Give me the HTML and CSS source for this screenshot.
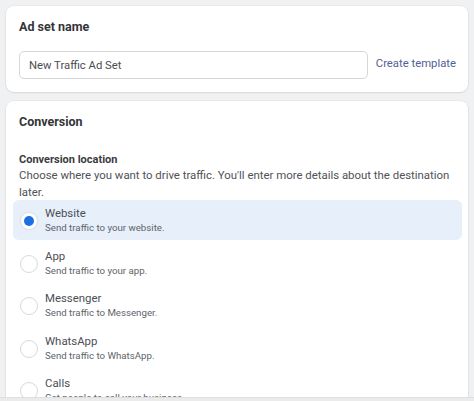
FILE: index.html
```html
<!DOCTYPE html>
<html lang="en">
<head>
<meta charset="utf-8">
<title>Ad set</title>
<link rel="stylesheet" href="styles.css">
</head>
<body>
<div class="page">
  <div class="scroll">
    <section class="card card-name">
      <h2 class="card-title">Ad set name</h2>
      <div class="name-row">
        <div class="input">New Traffic Ad Set</div>
        <a class="link" href="#">Create template</a>
      </div>
    </section>
    <section class="card card-conv">
      <h2 class="card-title">Conversion</h2>
      <div class="field-label">Conversion location</div>
      <p class="field-desc">Choose where you want to drive traffic. You'll enter more details about the destination later.</p>
      <div class="options">
        <div class="option selected">
          <span class="radio"><span class="dot"></span></span>
          <div class="opt-text"><div class="opt-label">Website</div><div class="opt-sub">Send traffic to your website.</div></div>
        </div>
        <div class="option">
          <span class="radio"></span>
          <div class="opt-text"><div class="opt-label">App</div><div class="opt-sub">Send traffic to your app.</div></div>
        </div>
        <div class="option">
          <span class="radio"></span>
          <div class="opt-text"><div class="opt-label">Messenger</div><div class="opt-sub">Send traffic to Messenger.</div></div>
        </div>
        <div class="option">
          <span class="radio"></span>
          <div class="opt-text"><div class="opt-label">WhatsApp</div><div class="opt-sub">Send traffic to WhatsApp.</div></div>
        </div>
        <div class="option">
          <span class="radio"></span>
          <div class="opt-text"><div class="opt-label">Calls</div><div class="opt-sub">Get people to call your business.</div></div>
        </div>
      </div>
    </section>
  </div>
  <div class="bottombar"></div>
</div>
</body>
</html>
```

FILE: styles.css
```css
* { box-sizing: border-box; }
html, body { margin: 0; padding: 0; }
body {
  background: #f0f1f3;
  font-family: Roboto, "Liberation Sans", Arial, sans-serif;
  color: #444950;
}
.page {
  height: 100vh;
  display: flex;
  flex-direction: column;
}
.scroll {
  flex: 1;
  overflow: hidden;
  padding: 6px 6px 0 6px;
  display: flex;
  flex-direction: column;
  gap: 9px;
}
.bottombar {
  height: 4px;
  background: #ebebec;
  border-top: 1px solid #dedfe1;
}
.card {
  background: #fff;
  border-radius: 8px;
  box-shadow: 0 0 0 1px rgba(0,0,0,0.03), 0 1px 2px rgba(0,0,0,0.08);
  padding: 13px 13px 13px 13px;
  flex-shrink: 0;
}
.card-title {
  margin: 0;
  font-size: 12.5px;
  line-height: 16px;
  font-weight: 700;
  color: #333539;
}
.name-row {
  margin-top: 16px;
  display: flex;
  align-items: center;
  gap: 8px;
}
.input {
  flex: 1;
  height: 28px;
  border: 1px solid #d4d6da;
  border-radius: 5px;
  padding: 0 9px;
  display: flex;
  align-items: center;
  font-size: 11.3px;
  color: #4a4d52;
}
.link {
  font-size: 11.3px;
  color: #52609a;
  text-decoration: none;
  margin-top: -3px;
  margin-right: -1px;
}
.card-conv { padding-bottom: 0; }
.field-label {
  margin-top: 22px;
  font-size: 11px;
  line-height: 15px;
  font-weight: 700;
  color: #3a3c40;
}
.field-desc {
  margin: 0;
  font-size: 11.4px;
  line-height: 17px;
  color: #4f5257;
}
.options {
  margin: -1px -7px 0 -6px;
  display: flex;
  flex-direction: column;
  gap: 2.5px;
}
.option {
  display: flex;
  align-items: center;
  gap: 7px;
  padding: 5px 7px;
  border-radius: 6px;
}
.option.selected { background: #e7effb; }
.radio {
  width: 18px;
  height: 18px;
  border-radius: 50%;
  border: 1px solid #d6d9dd;
  background: #fff;
  display: flex;
  align-items: center;
  justify-content: center;
  flex-shrink: 0;
  margin-top: 2px;
}
.selected .radio { border-color: #e2e6ec; box-shadow: 0 0 1px rgba(0,0,0,0.15); }
.dot {
  width: 10px;
  height: 10px;
  border-radius: 50%;
  background: #1a6fe3;
}
.opt-label {
  font-size: 11.4px;
  line-height: 16px;
  color: #4b4f55;
}
.opt-sub {
  font-size: 9.7px;
  line-height: 14px;
  color: #60646a;
}
```
